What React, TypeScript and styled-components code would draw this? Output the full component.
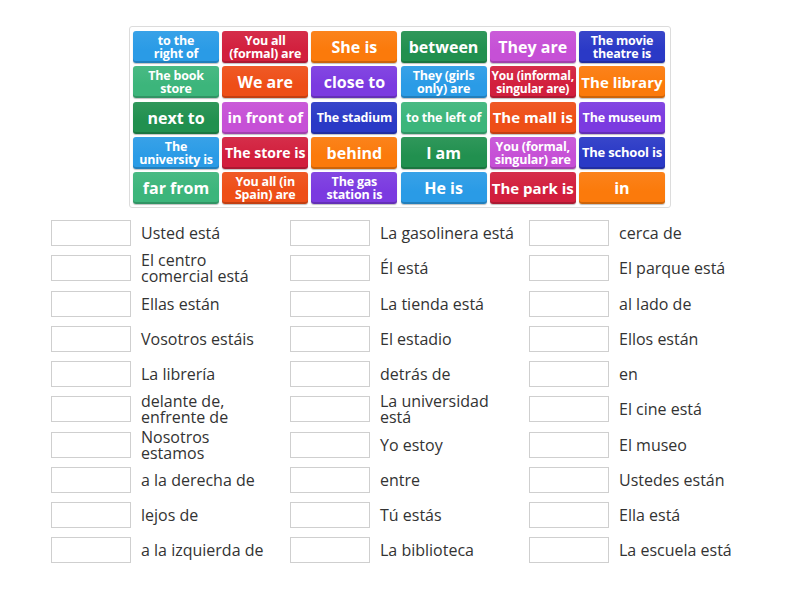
import React from 'react';
import styled, { createGlobalStyle } from 'styled-components';

const GlobalStyle = createGlobalStyle`
    html, body {
        margin: 0;
        padding: 0;
        background: #ffffff;
    }
    body {
        font-family: "Open Sans", "Liberation Sans", sans-serif;
    }
`;

// wordwall-like tile palette, cycles every 9 tiles
const palette = [
    '#2a9be6',
    '#d21f3d',
    '#fb7a0b',
    '#21904f',
    '#c650d6',
    '#2a39c6',
    '#3cb57b',
    '#ee4e17',
    '#7b3ae0',
];

type TileData = { text: React.ReactNode; size: number };

const tiles: TileData[] = [
    { text: <>to the<br />right of</>, size: 12.5 },
    { text: <>You all<br />(formal) are</>, size: 12.5 },
    { text: 'She is', size: 16 },
    { text: 'between', size: 16 },
    { text: 'They are', size: 16 },
    { text: <>The movie<br />theatre is</>, size: 12.5 },
    { text: <>The book<br />store</>, size: 12.5 },
    { text: 'We are', size: 16 },
    { text: 'close to', size: 16 },
    { text: <>They (girls<br />only) are</>, size: 12.5 },
    { text: <>You (informal,<br />singular are)</>, size: 12 },
    { text: 'The library', size: 15 },
    { text: 'next to', size: 16 },
    { text: 'in front of', size: 15 },
    { text: 'The stadium', size: 12.5 },
    { text: 'to the left of', size: 12.5 },
    { text: 'The mall is', size: 15 },
    { text: 'The museum', size: 12.5 },
    { text: <>The<br />university is</>, size: 12.5 },
    { text: 'The store is', size: 14 },
    { text: 'behind', size: 16 },
    { text: 'I am', size: 16 },
    { text: <>You (formal,<br />singular) are</>, size: 12.5 },
    { text: 'The school is', size: 13 },
    { text: 'far from', size: 16 },
    { text: <>You all (in<br />Spain) are</>, size: 12.5 },
    { text: <>The gas<br />station is</>, size: 12.5 },
    { text: 'He is', size: 16 },
    { text: 'The park is', size: 15 },
    { text: 'in', size: 16 },
];

const columns: React.ReactNode[][] = [
    [
        'Usted está',
        <>El centro<br />comercial está</>,
        'Ellas están',
        'Vosotros estáis',
        'La librería',
        <>delante de,<br />enfrente de</>,
        <>Nosotros<br />estamos</>,
        'a la derecha de',
        'lejos de',
        'a la izquierda de',
    ],
    [
        'La gasolinera está',
        'Él está',
        'La tienda está',
        'El estadio',
        'detrás de',
        <>La universidad<br />está</>,
        'Yo estoy',
        'entre',
        'Tú estás',
        'La biblioteca',
    ],
    [
        'cerca de',
        'El parque está',
        'al lado de',
        'Ellos están',
        'en',
        'El cine está',
        'El museo',
        'Ustedes están',
        'Ella está',
        'La escuela está',
    ],
];

const Page = styled.div`
    padding-top: 26px;
`;

const Board = styled.div`
    width: 534px;
    margin: 0 auto;
    padding: 4px 3px 3px 3px;
    border: 1px solid #dcdcdc;
    border-radius: 3px;
    display: grid;
    grid-template-columns: repeat(6, 86px);
    grid-auto-rows: 32px;
    column-gap: 3.2px;
    row-gap: 3.3px;
`;

const Tile = styled.div<{ $color: string; $size: number }>`
    display: flex;
    align-items: center;
    justify-content: center;
    text-align: center;
    border-radius: 3px;
    background: linear-gradient(to bottom, ${(p) => p.$color}ee, ${(p) => p.$color} 60%);
    box-shadow: inset 0 -2px 0 rgba(0, 0, 0, 0.18), 0 1px 1px rgba(0, 0, 0, 0.25);
    color: #ffffff;
    font-weight: 700;
    font-size: ${(p) => p.$size}px;
    line-height: ${(p) => (p.$size <= 12.5 ? 13 : p.$size + 2)}px;
    white-space: nowrap;
    overflow: hidden;
    letter-spacing: ${(p) => (p.$size <= 13 ? '-0.2px' : '0')};
`;

const Lists = styled.div`
    display: grid;
    grid-template-columns: repeat(3, 239px);
    padding-left: 51px;
    margin-top: 12px;
`;

const Column = styled.div`
    display: flex;
    flex-direction: column;
    gap: 9.25px;
`;

const Item = styled.div`
    display: flex;
    align-items: center;
    height: 26px;
`;

const Slot = styled.div`
    flex: none;
    width: 80px;
    height: 26px;
    box-sizing: border-box;
    border: 1px solid #cfcfcf;
    background: #ffffff;
`;

const Label = styled.div`
    margin-left: 10px;
    font-size: 16px;
    line-height: 16px;
    color: #333333;
    white-space: nowrap;
`;

const App: React.FC = () => {
    return (
        <>
            <GlobalStyle />
            <Page>
                <Board>
                    {tiles.map((t, i) => (
                        <Tile key={i} $color={palette[i % palette.length]} $size={t.size}>
                            <span>{t.text}</span>
                        </Tile>
                    ))}
                </Board>
                <Lists>
                    {columns.map((col, c) => (
                        <Column key={c}>
                            {col.map((label, r) => (
                                <Item key={r}>
                                    <Slot />
                                    <Label>{label}</Label>
                                </Item>
                            ))}
                        </Column>
                    ))}
                </Lists>
            </Page>
        </>
    );
};

export default App;
